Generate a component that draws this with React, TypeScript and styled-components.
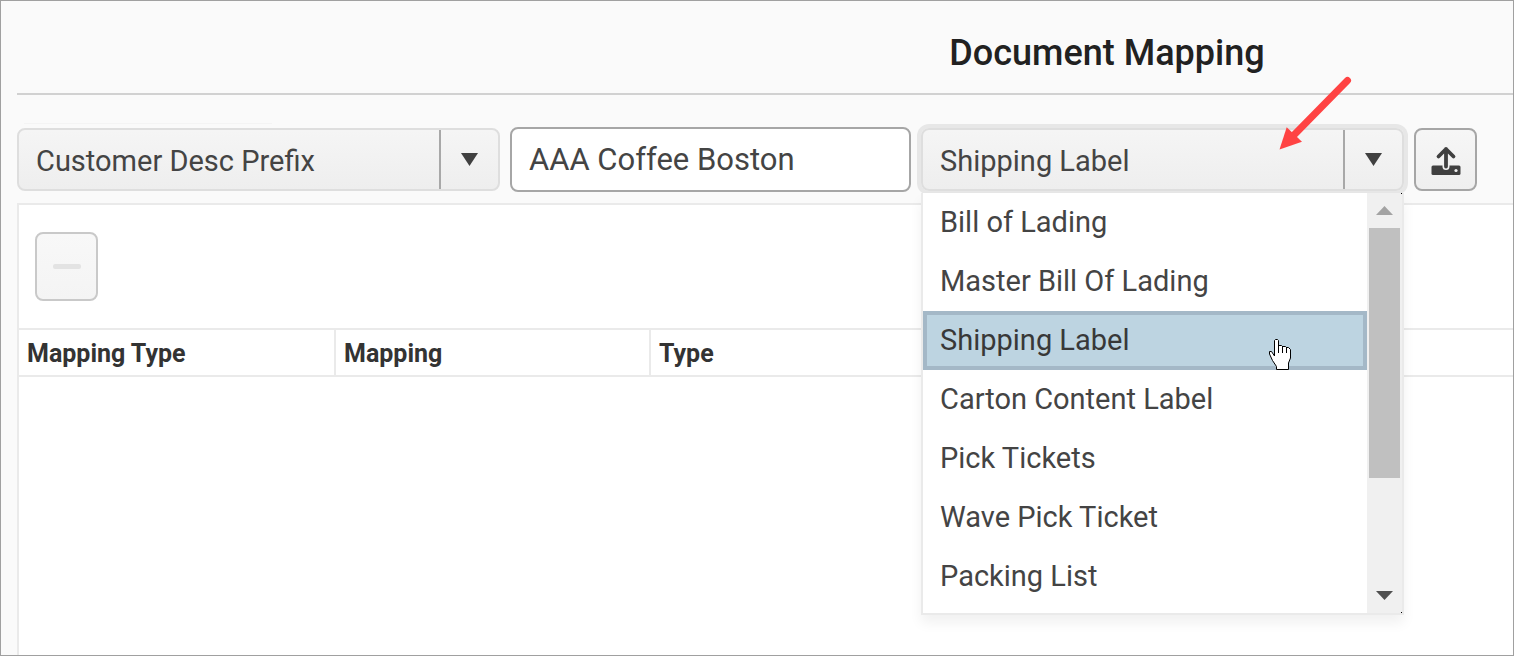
import React, { useState } from "react";
import styled, { createGlobalStyle } from "styled-components";

const GlobalStyle = createGlobalStyle`
  *, *::before, *::after { box-sizing: border-box; }
  html, body { margin: 0; height: 100%; }
  body { background: #fafafa; color: #444; font-family: Roboto, sans-serif; font-size: 29px; }
  #root { height: 100%; }
  button, input, select { font: inherit; color: inherit; margin: 0; }
`;

const Window = styled.div`
  min-height: 100%;
  display: flex;
  flex-direction: column;
  padding-left: 16px;
  border: 1px solid #a0a0a0;
  overflow: hidden;
`;

const Header = styled.header`
  height: 94px;
  padding-left: 684px;
  border-bottom: 2px solid #d1d1d1;
  display: flex;
  align-items: center;
  justify-content: center;
`;

const Title = styled.h1`
  margin: 0;
  padding-top: 12px;
  font-size: 36px;
  line-height: 44px;
  font-weight: 500;
  color: #212121;
`;

const Toolbar = styled.div`
  position: relative;
  display: grid;
  grid-template-columns: 483fr 401fr 483fr 63px;
  align-items: center;
  gap: 10px;
  padding: 32px 36px 11px 0;
  &::before {
    content: "";
    position: absolute;
    top: 28px;
    left: 7px;
    width: 248px;
    height: 1px;
    background: #f4f4f4;
  }
`;

const Combo = styled.div<{ $focused?: boolean }>`
  position: relative;
  min-width: 0;
  height: 63px;
  display: flex;
  border: 2px solid #dedede;
  border-radius: 8px;
  background: linear-gradient(#f5f5f5, #eeeeee);
  box-shadow: ${(p) => (p.$focused ? "0 0 0 4px #e7e7e7" : "none")};
`;

const ComboSelect = styled.select`
  flex: 1;
  min-width: 0;
  appearance: none;
  padding: 2px 17px 0;
  border: 0;
  background: transparent;
  outline: none;
`;

const ComboArrow = styled.button`
  width: 59px;
  padding: 0;
  border: 0;
  border-left: 2px solid #a8a8a8;
  background: transparent;
  display: flex;
  align-items: center;
  justify-content: center;
`;

const TextBox = styled.input`
  width: 100%;
  min-width: 0;
  height: 65px;
  padding: 0 17px;
  border: 2px solid #a6a6a6;
  border-radius: 8px;
  background: #fff;
  outline: none;
  && { font-size: 31px; }
`;

const IconButton = styled.button<{ $tall?: boolean }>`
  width: 63px;
  height: ${(p) => (p.$tall ? 69 : 63)}px;
  padding: 0;
  border: 2px solid #a6a6a6;
  border-radius: 8px;
  background: linear-gradient(#f6f6f6, #efefef);
  display: flex;
  align-items: center;
  justify-content: center;
  &:disabled { border-color: #c9c9c9; background: linear-gradient(#f8f8f8, #f4f4f4); }
`;

const Menu = styled.div`
  position: absolute;
  z-index: 2;
  top: 63px;
  left: -2px;
  right: -2px;
  display: flex;
  border: 2px solid #eaeaea;
  border-top: 0;
  background: #fff;
  box-shadow: 0 8px 12px rgba(0, 0, 0, 0.06);
  &::before, &::after {
    content: "";
    position: absolute;
    right: 0;
    width: 1px;
    height: 1px;
    background: #000;
  }
  &::before { top: 0; }
  &::after { bottom: 0; }
`;

const Options = styled.ul`
  flex: 1;
  height: 420px;
  margin: 0;
  padding: 0;
  list-style: none;
  overflow: hidden;
`;

const Option = styled.li`
  height: 59px;
  padding: 0 13px;
  border: 4px solid transparent;
  line-height: 50px;
  &[aria-selected="true"] { border-color: #a4b8c7; background: #bdd4e1; color: #383838; }
`;

const ScrollBar = styled.div`
  width: 35px;
  padding: 0 2px;
  background: #f0f0f0;
  display: flex;
  flex-direction: column;
`;

const ScrollStep = styled.span`
  height: 35px;
  display: flex;
  align-items: center;
  justify-content: center;
`;

const ScrollTrack = styled.div`
  flex: 1;
`;

const ScrollThumb = styled.div`
  height: 250px;
  background: #c0c0c0;
`;

const Panel = styled.main`
  flex: 1;
  border: 2px solid #eaeaea;
  border-width: 2px 0 0 2px;
  background: #fff;
`;

const PanelTools = styled.div`
  padding: 27px 16px;
`;

const Grid = styled.table`
  width: 100%;
  table-layout: fixed;
  border-collapse: separate;
  border-spacing: 0;
`;

const HeadCell = styled.th<{ $width?: number; $last?: boolean }>`
  width: ${(p) => (p.$width ? `${p.$width}px` : "auto")};
  height: 49px;
  padding: 2px 8px 0;
  border: 2px solid #eaeaea;
  border-width: ${(p) => (p.$last ? "2px 0" : "2px 2px 2px 0")};
  text-align: left;
  font-size: 25px;
  line-height: 32px;
  font-weight: 700;
  color: #333;
`;

const Callout = styled.svg`
  position: absolute;
  z-index: 3;
  right: 50px;
  top: -55px;
  pointer-events: none;
`;

const Pointer = styled.svg`
  position: absolute;
  z-index: 3;
  right: 109px;
  top: 209px;
  pointer-events: none;
`;

const Triangle = ({ width, height, color, up }: { width: number; height: number; color: string; up?: boolean }) => (
  <svg width={width} height={height} viewBox="0 0 10 10" preserveAspectRatio="none" aria-hidden="true">
    <path d={up ? "M0 10 5 0 10 10Z" : "M0 0H10L5 10Z"} fill={color} />
  </svg>
);

const documents = [
  "Bill of Lading",
  "Master Bill Of Lading",
  "Shipping Label",
  "Carton Content Label",
  "Pick Tickets",
  "Wave Pick Ticket",
  "Packing List",
];

export default function App() {
  const [type, setType] = useState("Shipping Label");
  const [customer, setCustomer] = useState("AAA Coffee Boston");
  return (
    <>
      <GlobalStyle />
      <Window>
        <Header>
          <Title>Document Mapping</Title>
        </Header>
        <Toolbar>
          <Combo>
            <ComboSelect aria-label="Mapping type">
              <option>Customer Desc Prefix</option>
            </ComboSelect>
            <ComboArrow aria-label="Show mapping types" tabIndex={-1}>
              <Triangle width={17} height={13} color="#404040" />
            </ComboArrow>
          </Combo>
          <TextBox aria-label="Customer" value={customer} onChange={(e) => setCustomer(e.target.value)} />
          <Combo $focused>
            <ComboSelect aria-label="Document type" value={type} onChange={(e) => setType(e.target.value)}>
              {documents.map((d) => (
                <option key={d}>{d}</option>
              ))}
            </ComboSelect>
            <ComboArrow aria-label="Show document types" tabIndex={-1}>
              <Triangle width={17} height={13} color="#404040" />
            </ComboArrow>
            <Menu>
              <Options role="listbox" aria-label="Document types">
                {documents.map((d) => (
                  <Option key={d} role="option" aria-selected={d === type} onClick={() => setType(d)}>
                    {d}
                  </Option>
                ))}
              </Options>
              <ScrollBar>
                <ScrollStep><Triangle width={17} height={9} color="#a3a3a3" up /></ScrollStep>
                <ScrollTrack><ScrollThumb /></ScrollTrack>
                <ScrollStep><Triangle width={17} height={9} color="#505050" /></ScrollStep>
              </ScrollBar>
            </Menu>
            <Callout width="80" height="80" viewBox="1272 75 80 80" aria-hidden="true">
              <path d="M1347.500 80.500 1293 136" stroke="#ff4343" strokeWidth="7" strokeLinecap="round" />
              <path d="M1279.500 149.500 1286.700 127.300 1302 141.700Z" fill="#ff4343" />
            </Callout>
            <Pointer width="24" height="32" viewBox="0 0 24 32" aria-hidden="true">
              <path
                d="M6.500 .5H8.500L9.500 1.500V6.500H12.500L13.500 7.500H16.500L17.500 8.500H19.500L21.500 10.500V19L19.500 24V30.500H7.500V27.500L3.500 21.500 .5 15V12.500H2.500L5.500 17V1.500Z"
                fill="#fff"
                stroke="#000"
              />
              <path d="M9.500 6V14M13.500 7V14M17.500 8V14" fill="none" stroke="#000" />
            </Pointer>
          </Combo>
          <IconButton aria-label="Upload document">
            <svg width="30" height="30" viewBox="0 0 30 30" aria-hidden="true">
              <rect x=".5" y="20.500" width="29" height="9.500" rx="1.500" fill="#404040" />
              <circle cx="25" cy="25.500" r="1.600" fill="#f1f1f1" />
              <path d="M15 15V21.500" stroke="#f1f1f1" strokeWidth="7" strokeLinecap="round" />
              <path d="M7.500 11.500 15 4 22.500 11.500M15 4V21.500" fill="none" stroke="#404040" strokeWidth="3.800" strokeLinecap="round" strokeLinejoin="round" />
            </svg>
          </IconButton>
        </Toolbar>
        <Panel>
          <PanelTools>
            <IconButton $tall disabled aria-label="Remove mapping">
              <svg width="28" height="5" viewBox="0 0 28 5" aria-hidden="true">
                <rect width="28" height="5" rx="2" fill="#e3e3e3" />
              </svg>
            </IconButton>
          </PanelTools>
          <Grid>
            <thead>
              <tr>
                <HeadCell scope="col" $width={317}>Mapping Type</HeadCell>
                <HeadCell scope="col" $width={315}>Mapping</HeadCell>
                <HeadCell scope="col" $last>Type</HeadCell>
              </tr>
            </thead>
          </Grid>
        </Panel>
      </Window>
    </>
  );
}
